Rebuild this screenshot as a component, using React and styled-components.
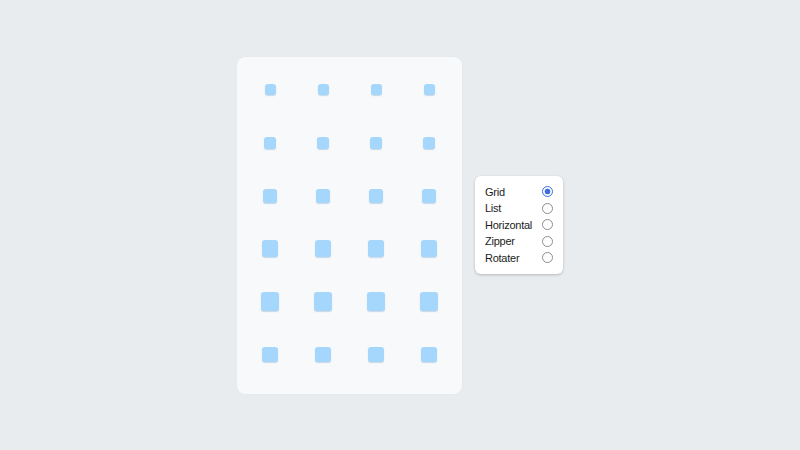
import { useState } from 'react';
import styled, { createGlobalStyle } from 'styled-components';

const GlobalStyle = createGlobalStyle`
  html, body {
    margin: 0;
    padding: 0;
    background: #e9ecef;
    font-family: "Liberation Sans", Arial, sans-serif;
  }
`;

const Page = styled.div`
  width: 800px;
  height: 450px;
  display: flex;
  align-items: center;
  justify-content: center;
  gap: 13px;
`;

const Panel = styled.div`
  width: 212px;
  padding: 6.5px 6.5px 12.5px;
  background: #f7f9fb;
  border-radius: 8px;
  box-shadow: 0 0 1px rgba(0, 0, 0, 0.08);
  display: grid;
  grid-template-columns: repeat(4, 53px);
  grid-auto-rows: 53px;
`;

const Cell = styled.div`
  display: flex;
  align-items: center;
  justify-content: center;
`;

const Square = styled.div`
  width: ${p => p.$size}px;
  height: ${p => p.$size}px;
  background: #a5d6fb;
  border-radius: 3px;
  box-shadow: 0 1px 1px rgba(60, 110, 160, 0.25);
`;

const Menu = styled.div`
  width: 88px;
  box-sizing: border-box;
  padding: 7px 10px 8px 10px;
  background: #fff;
  border-radius: 6px;
  box-shadow: 0 1px 3px rgba(0, 0, 0, 0.22);
`;

const Option = styled.label`
  display: flex;
  align-items: center;
  justify-content: space-between;
  height: 16.5px;
  font-size: 11px;
  letter-spacing: -0.25px;
  color: #1c1c1c;
  cursor: pointer;
`;

const Radio = styled.input`
  appearance: none;
  width: 11px;
  height: 11px;
  margin: 0;
  border: 1px solid #8d8d8d;
  border-radius: 50%;
  background: #fff;
  box-sizing: border-box;

  &:checked {
    border-color: #3d6ee0;
    background: radial-gradient(circle, #3d6ee0 0 2.6px, #fff 3.2px);
  }
`;

const sizes = [11, 12, 14, 16.5, 18.5, 15.5];
const options = ['Grid', 'List', 'Horizontal', 'Zipper', 'Rotater'];

export default function App() {
  const [layout, setLayout] = useState('Grid');

  return (
    <>
      <GlobalStyle />
      <Page>
        <Panel>
          {sizes.map((s, r) =>
            [0, 1, 2, 3].map(c => (
              <Cell key={`${r}-${c}`}>
                <Square $size={s} />
              </Cell>
            ))
          )}
        </Panel>
        <Menu>
          {options.map(o => (
            <Option key={o}>
              {o}
              <Radio
                type="radio"
                name="layout"
                checked={layout === o}
                onChange={() => setLayout(o)}
              />
            </Option>
          ))}
        </Menu>
      </Page>
    </>
  );
}
